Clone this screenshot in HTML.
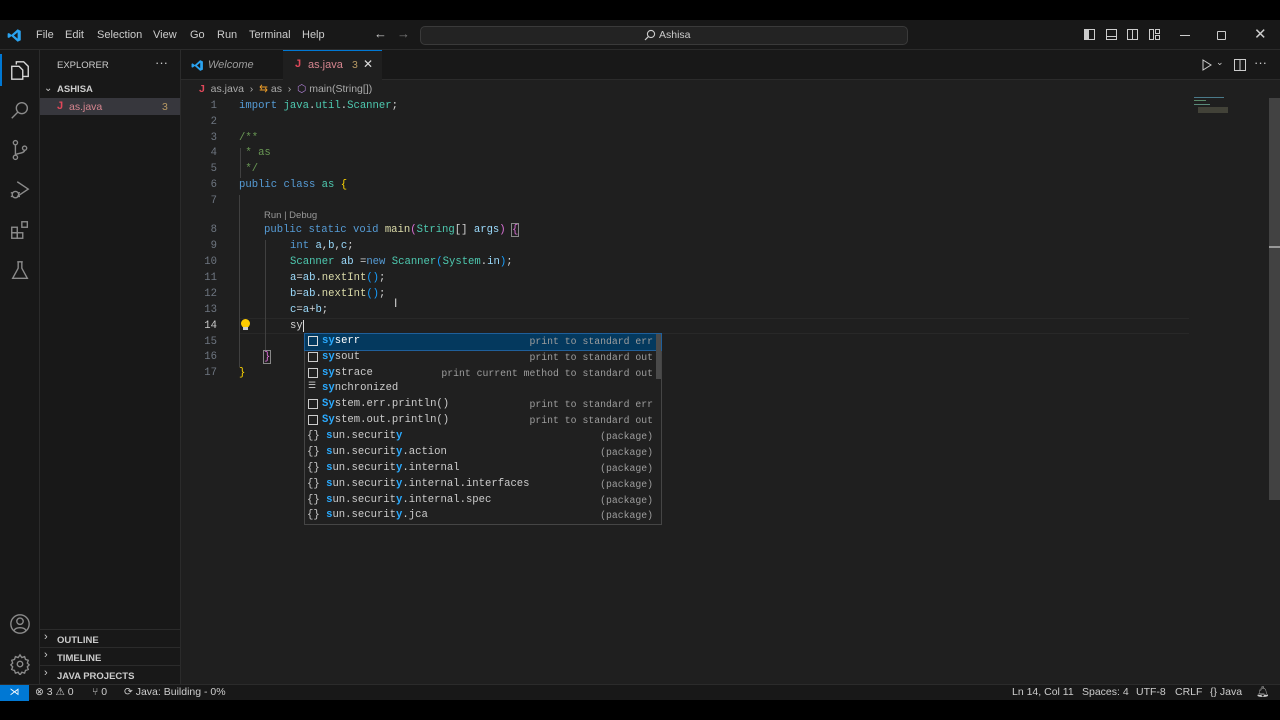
<!DOCTYPE html>
<html><head><meta charset="utf-8"><style>
*{margin:0;padding:0;box-sizing:border-box}
body{width:1280px;height:720px;background:#000;position:relative;overflow:hidden;font-family:"Liberation Sans",sans-serif;color:#ccc;font-size:11px}
.abs{position:absolute}
.mono{font-family:"Liberation Mono",monospace;font-size:10.6px;white-space:pre}
#title{left:0;top:20px;width:1280px;height:30px;background:#181818;border-bottom:1px solid #2b2b2b}
.menu{top:9px;font-size:11px;color:#cccccc}
#act{left:0;top:50px;width:40px;height:634px;background:#181818;border-right:1px solid #2b2b2b}
#side{left:40px;top:50px;width:141px;height:634px;background:#181818;border-right:1px solid #2b2b2b}
#tabs{left:181px;top:50px;width:1099px;height:30px;background:#181818;border-bottom:1px solid #2b2b2b}
#ed{left:181px;top:80px;width:1099px;height:604px;background:#1f1f1f}
#status{left:0;top:684px;width:1280px;height:16px;background:#181818;border-top:1px solid #2b2b2b;font-size:10.5px;color:#ccc}
.ln{position:absolute;left:0;width:36px;text-align:right;color:#6e7681}
.cl{position:absolute;left:58px}
.k{color:#569cd6}.t{color:#4ec9b0}.c{color:#6a9955}.f{color:#dcdcaa}.v{color:#9cdcfe}.y{color:#ffd700}.p{color:#da70d6}.b{color:#179fff}.w{color:#d4d4d4}
#sug{left:304px;top:333px;width:358px;height:192px;background:#202020;border:1px solid #454545}
.row{position:absolute;left:0;width:356px;height:16px}
.row .ic{position:absolute;left:3px;top:2px;width:10px;height:10px;border:1px solid #ccc}
.row .lbl{position:absolute;left:17px;top:1px;color:#ccc}
.row .m{color:#2aaaff;font-weight:bold}
.row .d{position:absolute;right:8px;top:2px;color:#9d9d9d;font-size:9.8px}
.sec{position:absolute;left:0;width:141px;height:18px;border-top:1px solid #2b2b2b;font-weight:bold;font-size:9.5px;color:#ccc;padding:5px 0 0 17px}
</style></head><body>

<div id="title" class="abs">
 <svg class="abs" style="left:7px;top:8px" width="15" height="15" viewBox="0 0 24 24"><path d="M17 2 L22 4.5 V19.5 L17 22 L7 13 L3 16 L1 15 V9 L3 8 L7 11 Z M17 7 L11 12 L17 17 Z" fill="#2aa3f0"/></svg>
 <span class="abs menu" style="left:36px">File</span>
 <span class="abs menu" style="left:65px">Edit</span>
 <span class="abs menu" style="left:97px">Selection</span>
 <span class="abs menu" style="left:153px">View</span>
 <span class="abs menu" style="left:190px">Go</span>
 <span class="abs menu" style="left:217px">Run</span>
 <span class="abs menu" style="left:249px">Terminal</span>
 <span class="abs menu" style="left:302px">Help</span>
 <span class="abs" style="left:374px;top:6px;font-size:13px;color:#ccc">←</span>
 <span class="abs" style="left:397px;top:6px;font-size:13px;color:#777">→</span>
 <div class="abs" style="left:420px;top:6px;width:488px;height:19px;background:#232323;border:1px solid #3a3a3a;border-radius:5px"></div>
 <svg class="abs" style="left:644px;top:9px" width="12" height="12" viewBox="0 0 12 12"><circle cx="7" cy="5" r="3.6" fill="none" stroke="#ccc" stroke-width="1.1"/><path d="M4.4 7.6 L1 11" stroke="#ccc" stroke-width="1.2"/></svg>
 <span class="abs" style="left:659px;top:9px;font-size:10.5px;color:#ccc">Ashisa</span>
 <svg class="abs" style="left:1083px;top:8px" width="90" height="14" viewBox="0 0 90 14" fill="none" stroke="#ccc" stroke-width="1"><rect x="1.5" y="1.5" width="10" height="10"/><rect x="1.5" y="1.5" width="4" height="10" fill="#ccc"/><rect x="23.5" y="1.5" width="10" height="10"/><path d="M23.5 8.5H33.5"/><rect x="44.5" y="1.5" width="10" height="10"/><path d="M49.5 1.5V11.5"/><rect x="66.5" y="1.5" width="4" height="10"/><rect x="72.5" y="1.5" width="4" height="4"/><rect x="72.5" y="7.5" width="4" height="4"/></svg>
 <div class="abs" style="left:1180px;top:15px;width:10px;height:1px;background:#ccc"></div>
 <div class="abs" style="left:1217px;top:11px;width:9px;height:9px;border:1px solid #ccc;border-radius:1px"></div>
 <span class="abs" style="left:1254px;top:5px;font-size:15px;color:#ccc">✕</span>
</div>

<div id="act" class="abs">
 <div class="abs" style="left:0;top:4px;width:2px;height:32px;background:#0078d4"></div>
 <svg class="abs" style="left:9px;top:9px" width="22" height="22" viewBox="0 0 24 24" fill="none" stroke="#d7d7d7" stroke-width="1.5"><path d="M8 6V3h8l5 5v11h-6"/><path d="M3 8h8l4 4v10H3z"/></svg>
 <svg class="abs" style="left:9px;top:49px" width="22" height="22" viewBox="0 0 24 24" fill="none" stroke="#8b8b8b" stroke-width="1.5"><circle cx="14" cy="10" r="6"/><path d="M9.5 14.5L3 21"/></svg>
 <svg class="abs" style="left:9px;top:89px" width="22" height="22" viewBox="0 0 24 24" fill="none" stroke="#8b8b8b" stroke-width="1.5"><circle cx="7" cy="4" r="2.3"/><circle cx="7" cy="20" r="2.3"/><circle cx="17" cy="10" r="2.3"/><path d="M7 6.3V17.7M17 12.3c0 4-10 3-10 5.4"/></svg>
 <svg class="abs" style="left:9px;top:129px" width="22" height="22" viewBox="0 0 24 24" fill="none" stroke="#8b8b8b" stroke-width="1.5"><path d="M9 3l12 8-12 8"/><circle cx="7" cy="17" r="3.5"/><path d="M2 15h2M2 19h2M10 15h2M10 19h2"/></svg>
 <svg class="abs" style="left:9px;top:169px" width="22" height="22" viewBox="0 0 24 24" fill="none" stroke="#8b8b8b" stroke-width="1.5"><rect x="3" y="9" width="6" height="6"/><rect x="3" y="15" width="6" height="6"/><rect x="9" y="15" width="6" height="6"/><rect x="14" y="3" width="6" height="6"/></svg>
 <svg class="abs" style="left:9px;top:209px" width="22" height="22" viewBox="0 0 24 24" fill="none" stroke="#8b8b8b" stroke-width="1.5"><path d="M9 3h6M10 3v7L4 21h16L14 10V3"/></svg>
 <svg class="abs" style="left:9px;top:563px" width="22" height="22" viewBox="0 0 24 24" fill="none" stroke="#8b8b8b" stroke-width="1.5"><circle cx="12" cy="12" r="10"/><circle cx="12" cy="9" r="3.5"/><path d="M5.5 19c2-4 11-4 13 0"/></svg>
 <svg class="abs" style="left:9px;top:603px" width="22" height="22" viewBox="0 0 24 24" fill="none" stroke="#8b8b8b" stroke-width="1.5"><circle cx="12" cy="12" r="3"/><path d="M12 2l2 3 3-1 1 3 3 1-1 3 2 2-2 2 1 3-3 1-1 3-3-1-2 3-2-3-3 1-1-3-3-1 1-3-2-2 2-2-1-3 3-1 1-3 3 1z"/></svg>
</div>

<div id="side" class="abs">
 <span class="abs" style="left:17px;top:10px;font-size:9.5px;color:#ccc">EXPLORER</span>
 <span class="abs" style="left:115px;top:5px;font-size:13px;color:#ccc">···</span>
 <span class="abs" style="left:4px;top:33px;font-size:10px;color:#ccc">⌄</span>
 <span class="abs" style="left:17px;top:34px;font-size:9.5px;font-weight:bold;color:#ccc">ASHISA</span>
 <div class="abs" style="left:0;top:48px;width:140px;height:17px;background:#37373d"></div>
 <span class="abs" style="left:17px;top:50px;font-size:11px;color:#e0485a;font-weight:bold">J</span>
 <span class="abs" style="left:29px;top:51px;font-size:10.5px;color:#d6858f">as.java</span>
 <span class="abs" style="left:122px;top:51px;font-size:10.5px;color:#b89a64">3</span>
 <div class="sec" style="top:579px">OUTLINE</div>
 <div class="sec" style="top:597px">TIMELINE</div>
 <div class="sec" style="top:615px;height:19px">JAVA PROJECTS</div>
 <span class="abs" style="left:4px;top:581px;color:#ccc;font-size:11px">›</span>
 <span class="abs" style="left:4px;top:599px;color:#ccc;font-size:11px">›</span>
 <span class="abs" style="left:4px;top:617px;color:#ccc;font-size:11px">›</span>
</div>

<div id="tabs" class="abs">
 <svg class="abs" style="left:10px;top:9px" width="13" height="13" viewBox="0 0 24 24"><path d="M17 2 L22 4.5 V19.5 L17 22 L7 13 L3 16 L1 15 V9 L3 8 L7 11 Z M17 7 L11 12 L17 17 Z" fill="#2aa3f0"/></svg>
 <span class="abs" style="left:27px;top:9px;font-style:italic;font-size:11px;color:#9d9d9d">Welcome</span>
 <div class="abs" style="left:102px;top:0;width:99px;height:31px;background:#1f1f1f;border-top:1px solid #0078d4"></div>
 <span class="abs" style="left:114px;top:8px;font-size:11px;color:#e0485a;font-weight:bold">J</span>
 <span class="abs" style="left:127px;top:9px;font-size:11px;color:#d6858f">as.java</span>
 <span class="abs" style="left:171px;top:9px;font-size:10.5px;color:#b89a64">3</span>
 <span class="abs" style="left:182px;top:7px;font-size:12px;color:#ddd">✕</span>
 <svg class="abs" style="left:1020px;top:9px" width="12" height="12" viewBox="0 0 12 12"><path d="M2 1L10 6L2 11Z" fill="none" stroke="#ccc"/></svg>
 <span class="abs" style="left:1035px;top:7px;font-size:9px;color:#ccc">⌄</span>
 <svg class="abs" style="left:1053px;top:9px" width="12" height="12" viewBox="0 0 12 12" fill="none" stroke="#ccc"><rect x="0.5" y="0.5" width="11" height="11"/><path d="M6 0.5V11.5"/></svg>
 <span class="abs" style="left:1073px;top:5px;font-size:13px;color:#ccc">···</span>
</div>

<div id="ed" class="abs">
 <div class="abs" style="left:18px;top:3px;font-size:10.5px;color:#aaa;white-space:nowrap"><b style="color:#e0485a">J</b>&nbsp; as.java &nbsp;›&nbsp; <span style="color:#ee9d28">⇆</span> as &nbsp;›&nbsp; <span style="color:#b180d7">⬡</span> main(String[])</div>
 <div class="abs mono" style="left:0;top:20px;width:1000px;height:310px">
  <div class="ln" style="top:0">1</div><div class="cl" style="top:0"><span class="k">import</span> <span class="t">java</span><span class="w">.</span><span class="t">util</span><span class="w">.</span><span class="t">Scanner</span><span class="w">;</span></div>
  <div class="ln" style="top:16px">2</div>
  <div class="ln" style="top:32px">3</div><div class="cl c" style="top:32px">/**</div>
  <div class="ln" style="top:47px">4</div><div class="cl c" style="top:47px"> * as</div>
  <div class="ln" style="top:63px">5</div><div class="cl c" style="top:63px"> */</div>
  <div class="ln" style="top:79px">6</div><div class="cl" style="top:79px"><span class="k">public</span> <span class="k">class</span> <span class="t">as</span> <span class="y">{</span></div>
  <div class="ln" style="top:95px">7</div>
  <div class="abs" style="left:83px;top:110px;font-family:'Liberation Sans';font-size:9.5px;color:#999">Run | Debug</div>
  <div class="ln" style="top:124px">8</div><div class="cl" style="top:124px;left:83px"><span class="k">public</span> <span class="k">static</span> <span class="k">void</span> <span class="f">main</span><span class="p">(</span><span class="t">String</span><span class="w">[]</span> <span class="v">args</span><span class="p">)</span> <span class="p" style="outline:1px solid #888">{</span></div>
  <div class="ln" style="top:140px">9</div><div class="cl" style="top:140px;left:109px"><span class="k">int</span> <span class="v">a</span><span class="w">,</span><span class="v">b</span><span class="w">,</span><span class="v">c</span><span class="w">;</span></div>
  <div class="ln" style="top:156px">10</div><div class="cl" style="top:156px;left:109px"><span class="t">Scanner</span> <span class="v">ab</span> <span class="w">=</span><span class="k">new</span> <span class="t">Scanner</span><span class="b">(</span><span class="t">System</span><span class="w">.</span><span class="v">in</span><span class="b">)</span><span class="w">;</span></div>
  <div class="ln" style="top:172px">11</div><div class="cl" style="top:172px;left:109px"><span class="v">a</span><span class="w">=</span><span class="v">ab</span><span class="w">.</span><span class="f">nextInt</span><span class="b">()</span><span class="w">;</span></div>
  <div class="ln" style="top:188px">12</div><div class="cl" style="top:188px;left:109px"><span class="v">b</span><span class="w">=</span><span class="v">ab</span><span class="w">.</span><span class="f">nextInt</span><span class="b">()</span><span class="w">;</span></div>
  <div class="ln" style="top:204px">13</div><div class="cl" style="top:204px;left:109px"><span class="v">c</span><span class="w">=</span><span class="v">a</span><span class="w">+</span><span class="v">b</span><span class="w">;</span></div>
  <div class="abs" style="left:58px;width:950px;height:16px;border-top:1px solid #282828;border-bottom:1px solid #282828;top:218px"></div>
  <div class="ln" style="top:220px;color:#ccc">14</div><div class="cl" style="top:220px;left:109px"><span class="w">sy</span><span style="border-left:1px solid #ddd"></span></div>
  <div class="ln" style="top:236px">15</div>
  <div class="ln" style="top:251px">16</div><div class="cl" style="top:251px;left:83px"><span class="p" style="outline:1px solid #888">}</span></div>
  <div class="ln" style="top:267px">17</div><div class="cl y" style="top:267px">}</div>
  <div class="abs" style="left:58px;top:95px;width:1px;height:172px;background:#404040"></div>
  <div class="abs" style="left:84px;top:140px;width:1px;height:110px;background:#404040"></div>
  <div class="abs" style="left:59px;top:48px;width:1px;height:30px;background:#404040"></div>
 </div>
 <div class="abs" style="left:60px;top:239px;width:9px;height:9px;border-radius:50%;background:#ffcc00"></div>
 <div class="abs" style="left:62px;top:247px;width:5px;height:3px;background:#ccc"></div>
 <div class="abs" style="left:213px;top:216px;font-size:12px;color:#ccc">I</div>
 <div class="abs" style="left:1013px;top:17px;width:30px;height:1px;background:#4a7a8a"></div>
 <div class="abs" style="left:1013px;top:20px;width:12px;height:1px;background:#5a8a6a"></div>
 <div class="abs" style="left:1013px;top:24px;width:16px;height:1px;background:#5a8a7a"></div>
 <div class="abs" style="left:1017px;top:27px;width:30px;height:6px;background:#5a5a4a;opacity:.6"></div>
 <div class="abs" style="left:1088px;top:18px;width:11px;height:402px;background:#424242"></div>
 <div class="abs" style="left:1088px;top:166px;width:11px;height:2px;background:#999"></div>
</div>

<div id="sug" class="abs mono">
 <div class="row" style="top:0;background:#04395e;outline:1px solid #1f5f9a"><div class="ic" style="border-color:#ddd"></div><div class="lbl"><span class="m">sy</span><span style="color:#fff">serr</span></div><div class="d">print to standard err</div></div>
 <div class="row" style="top:16px"><div class="ic"></div><div class="lbl"><span class="m">sy</span>sout</div><div class="d">print to standard out</div></div>
 <div class="row" style="top:32px"><div class="ic"></div><div class="lbl"><span class="m">sy</span>strace</div><div class="d">print current method to standard out</div></div>
 <div class="row" style="top:47px"><div class="ic" style="border:none;font-size:9px;top:0">☰</div><div class="lbl"><span class="m">sy</span>nchronized</div></div>
 <div class="row" style="top:63px"><div class="ic"></div><div class="lbl"><span class="m">S</span><span class="m">y</span>stem.err.println()</div><div class="d">print to standard err</div></div>
 <div class="row" style="top:79px"><div class="ic"></div><div class="lbl"><span class="m">S</span><span class="m">y</span>stem.out.println()</div><div class="d">print to standard out</div></div>
 <div class="row" style="top:95px"><div class="lbl" style="left:2px">{} <span class="m">s</span>un.securit<span class="m">y</span></div><div class="d">(package)</div></div>
 <div class="row" style="top:111px"><div class="lbl" style="left:2px">{} <span class="m">s</span>un.securit<span class="m">y</span>.action</div><div class="d">(package)</div></div>
 <div class="row" style="top:127px"><div class="lbl" style="left:2px">{} <span class="m">s</span>un.securit<span class="m">y</span>.internal</div><div class="d">(package)</div></div>
 <div class="row" style="top:143px"><div class="lbl" style="left:2px">{} <span class="m">s</span>un.securit<span class="m">y</span>.internal.interfaces</div><div class="d">(package)</div></div>
 <div class="row" style="top:159px"><div class="lbl" style="left:2px">{} <span class="m">s</span>un.securit<span class="m">y</span>.internal.spec</div><div class="d">(package)</div></div>
 <div class="row" style="top:174px"><div class="lbl" style="left:2px">{} <span class="m">s</span>un.securit<span class="m">y</span>.jca</div><div class="d">(package)</div></div>
 <div class="abs" style="right:0;top:0;width:5px;height:45px;background:#4a4a4a"></div>
</div>

<div id="status" class="abs">
 <div class="abs" style="left:0;top:0;width:29px;height:16px;background:#0078d4;color:#fff;text-align:center;font-size:10px;line-height:15px">⋊</div>
 <span class="abs" style="left:35px;top:1px">⊗ 3 ⚠ 0</span>
 <span class="abs" style="left:92px;top:1px">⑂ 0</span>
 <span class="abs" style="left:124px;top:1px">⟳ Java: Building - 0%</span>
 <span class="abs" style="left:1012px;top:1px">Ln 14, Col 11</span>
 <span class="abs" style="left:1082px;top:1px">Spaces: 4</span>
 <span class="abs" style="left:1136px;top:1px">UTF-8</span>
 <span class="abs" style="left:1175px;top:1px">CRLF</span>
 <span class="abs" style="left:1210px;top:1px">{} Java</span>
 <span class="abs" style="left:1256px;top:0px">🔔︎</span>
</div>
</body></html>
